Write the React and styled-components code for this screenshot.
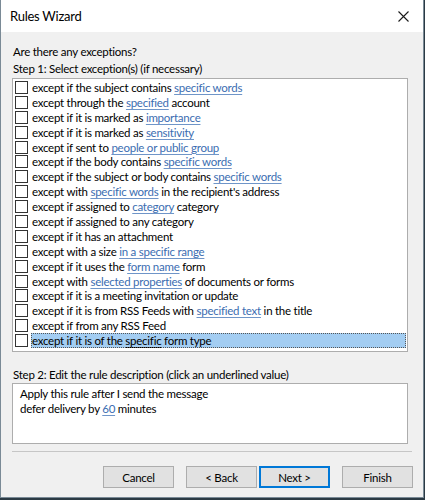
import React from "react";
import styled, { createGlobalStyle } from "styled-components";

const Global = createGlobalStyle`
	html, body {
		margin: 0;
		padding: 0;
		background: #2b3a44;
	}
	* {
		box-sizing: border-box;
	}
`;

const exceptions = [
	["except if the subject contains ", ["specific words"]],
	["except through the ", ["specified"], " account"],
	["except if it is marked as ", ["importance"]],
	["except if it is marked as ", ["sensitivity"]],
	["except if sent to ", ["people or public group"]],
	["except if the body contains ", ["specific words"]],
	["except if the subject or body contains ", ["specific words"]],
	["except with ", ["specific words"], " in the recipient's address"],
	["except if assigned to ", ["category"], " category"],
	["except if assigned to any category"],
	["except if it has an attachment"],
	["except with a size ", ["in a specific range"]],
	["except if it uses the ", ["form name"], " form"],
	["except with ", ["selected properties"], " of documents or forms"],
	["except if it is a meeting invitation or update"],
	["except if it is from RSS Feeds with ", ["specified text"], " in the title"],
	["except if from any RSS Feed"],
	["except if it is of the ", ["specific"], " form type"],
];

const App = () => {
	return (
		<>
			<Global />
			<Window>
				<TitleBar>
					<Title>Rules Wizard</Title>
					<Close aria-label="close">
						<svg width="11" height="11" viewBox="0 0 11 11">
							<path d="M0.5 0.5 L10.5 10.5 M10.5 0.5 L0.5 10.5" stroke="#1a1a1a" strokeWidth="1.1" />
						</svg>
					</Close>
				</TitleBar>
				<Body>
					<Label>Are there any exceptions?</Label>
					<Label>Step 1: Select exception(s) (if necessary)</Label>
					<ListBox>
						{exceptions.map((parts, i) => {
							const selected = i === exceptions.length - 1;
							return (
								<Row key={i}>
									<Check />
									<RowText $selected={selected}>
										{parts.map((p, j) =>
											Array.isArray(p) ? (
												<Link key={j} $plain={selected}>
													{p[0]}
												</Link>
											) : (
												<span key={j}>{p}</span>
											)
										)}
									</RowText>
								</Row>
							);
						})}
					</ListBox>
					<StepTwo>Step 2: Edit the rule description (click an underlined value)</StepTwo>
					<DescBox>
						<div>Apply this rule after I send the message</div>
						<div>
							defer delivery by <Link>60</Link> minutes
						</div>
					</DescBox>
					<Separator />
					<Buttons>
						<Button>Cancel</Button>
						<Pair>
							<Button>&lt; Back</Button>
							<Button $default>Next &gt;</Button>
						</Pair>
						<Button>Finish</Button>
					</Buttons>
				</Body>
			</Window>
		</>
	);
};

const Window = styled.div`
	width: 424px;
	height: 498px;
	border: 1px solid #7a8a96;
	border-top: none;
	background: #f0f0f0;
	display: flex;
	flex-direction: column;
	font-family: "Segoe UI", Lato, sans-serif;
	font-size: 11.5px;
	letter-spacing: -0.25px;
	line-height: 15px;
	color: #000;
`;

const TitleBar = styled.div`
	height: 32px;
	background: #fff;
	display: flex;
	align-items: center;
	justify-content: space-between;
	padding: 0 14px 0 9px;
	flex-shrink: 0;
`;

const Title = styled.div`
	font-size: 13px;
	line-height: 18px;
	color: #000;
	padding-bottom: 1px;
`;

const Close = styled.div`
	display: flex;
	align-items: center;
`;

const Body = styled.div`
	flex: 1;
	display: flex;
	flex-direction: column;
	padding: 11px 15px 0 11px;
`;

const Label = styled.div`
	line-height: 17px;
	margin-left: 1px;
`;

const ListBox = styled.div`
	background: #fff;
	border: 1px solid #adadad;
	height: 274px;
	padding: 1px 1px;
	margin-top: 1px;
`;

const Row = styled.div`
	height: 14.9px;
	display: flex;
	align-items: center;
`;

const Check = styled.div`
	width: 13px;
	height: 13px;
	border: 1px solid #333;
	background: #fff;
	margin: 0 3px 0 1px;
	flex-shrink: 0;
`;

const RowText = styled.div`
	flex: 1;
	height: 100%;
	display: flex;
	align-items: center;
	white-space: pre;
	padding-left: 1px;
	background: ${(p) => (p.$selected ? "#a3cdf2" : "transparent")};
	outline: ${(p) => (p.$selected ? "1px dotted #555" : "none")};
	outline-offset: -1px;
`;

const Link = styled.span`
	color: ${(p) => (p.$plain ? "#000" : "#3b6db1")};
	text-decoration: underline;
	text-underline-offset: 2px;
	text-decoration-color: ${(p) => (p.$plain ? "#000" : "#6f95c8")};
`;

const StepTwo = styled.div`
	margin-top: 14px;
	line-height: 17px;
	margin-left: 1px;
`;

const DescBox = styled.div`
	background: #fff;
	border: 1px solid #adadad;
	height: 61px;
	padding: 2px 7px;
	line-height: 15px;
`;

const Separator = styled.div`
	height: 1px;
	background: #c6c6c6;
	margin: 7px -4px 0 0;
`;

const Buttons = styled.div`
	display: flex;
	justify-content: flex-end;
	gap: 12px;
	margin-top: 14px;
	margin-right: -5px;
`;

const Pair = styled.div`
	display: flex;
	gap: 2px;
`;

const Button = styled.div`
	width: 71px;
	height: 22px;
	display: flex;
	align-items: center;
	justify-content: center;
	background: #e1e1e1;
	border: 1px solid ${(p) => (p.$default ? "#0078d7" : "#adadad")};
	box-shadow: ${(p) => (p.$default ? "inset 0 0 0 1px #0078d7" : "none")};
`;

export default App;
